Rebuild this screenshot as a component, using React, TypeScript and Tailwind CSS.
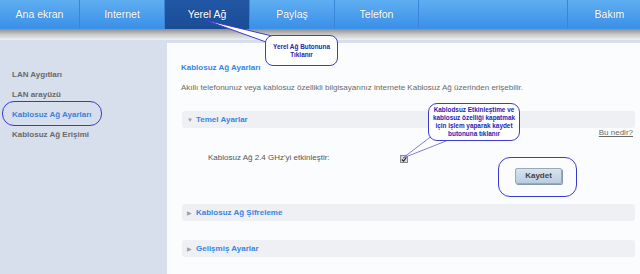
import React from "react";

const tabs: { label: string; w: string; active?: boolean }[] = [
  { label: "Ana ekran", w: "w-[80px]" },
  { label: "Internet", w: "w-[85px]" },
  { label: "Yerel Ağ", w: "w-[85px]", active: true },
  { label: "Paylaş", w: "w-[85px]" },
  { label: "Telefon", w: "w-[84px]" },
  { label: "", w: "w-[149px]" },
  { label: "Bakım", w: "w-[84px]" },
];

function SectionBar({ label, open }: { label: string; open?: boolean }) {
  return (
    <div className="h-[17px] bg-[#eff0f3] rounded-[3px] flex items-center pl-[5px]">
      <span className="text-[#9aa0a8] text-[6px] w-[8px] leading-none">{open ? "▼" : "▶"}</span>
      <span className="text-[8px] font-bold text-[#3a84e0] ml-[1px]">{label}</span>
    </div>
  );
}

export default function App() {
  return (
    <div
      className="relative w-[640px] h-[274px] overflow-hidden bg-[#d6dfeb]"
      style={{ fontFamily: '"Liberation Sans", Arial, sans-serif' }}
    >
      {/* nav */}
      <div className="flex h-[29px] bg-gradient-to-b from-[#5eaef2] to-[#3a8fe7] overflow-hidden">
        {tabs.map((t, i) => (
          <div
            key={i}
            className={`${t.w} shrink-0 h-full flex items-center justify-center text-white text-[10.5px] border-r border-[#3a86d6] ${
              t.active ? "bg-gradient-to-b from-[#2157a5] to-[#1b4c96]" : ""
            }`}
            style={{ textShadow: "0 0 1px rgba(0,0,0,0.25)" }}
          >
            {t.label}
          </div>
        ))}
      </div>
      {/* shadow band */}
      <div className="h-[11px] bg-gradient-to-b from-[#8e8e8e] via-[#c9c9c9] to-[#eef0f3]" />

      <div className="flex">
        {/* sidebar */}
        <div className="w-[167px] shrink-0 pt-[25px] pl-[12px] text-[8px] font-bold text-[#6a6a6a] leading-[20px]">
          <div>LAN Aygıtları</div>
          <div>LAN arayüzü</div>
          <div className="text-[#3b7fde]">Kablosuz Ağ Ayarları</div>
          <div>Kablosuz Ağ Erişimi</div>
        </div>

        {/* main */}
        <div className="flex-1 mt-[3px] h-[240px] bg-[#fbfcfd] pl-[15px] pr-[5px] pt-[20px]">
          <div className="text-[8px] font-bold text-[#3a84e0] leading-[10px] -ml-[1px]">
            Kablosuz Ağ Ayarları
          </div>
          <div className="text-[8px] text-[#6a6a6a] leading-[10px] mt-[10px] -ml-[1px]">
            Akıllı telefonunuz veya kablosuz özellikli bilgisayarınız internete Kablosuz Ağ üzerinden erişebilir.
          </div>
          <div className="mt-[18px]">
            <SectionBar label="Temel Ayarlar" open />
          </div>
          <div className="flex justify-end pr-[2px] mt-[0px] h-[9px] items-center">
            <span className="text-[8px] text-[#6a6a6a] underline leading-none">Bu nedir?</span>
          </div>
          <div className="flex items-center mt-[16px] pl-[26px] h-[10px]">
            <span className="w-[192px] text-[8px] text-[#555] leading-none">
              Kablosuz Ağ 2.4 GHz'yi etkinleştir:
            </span>
            <span className="w-[8px] h-[8px] border border-[#8a8a8a] bg-[#d8d8d8] flex items-center justify-center mt-[2px]">
              <svg width="7" height="7" viewBox="0 0 7 7">
                <path d="M1 3.5 L3 5.5 L6.2 1" stroke="#222" strokeWidth="1.3" fill="none" />
              </svg>
            </span>
          </div>
          <div className="flex pl-[333px] mt-[5px]">
            <div className="w-[47px] h-[16px] rounded-[2px] border border-[#9aa8b8] bg-gradient-to-b from-[#d8e4ef] to-[#b9cde0] flex items-center justify-center text-[8px] font-bold text-[#444] shadow-[1px_1px_0_#8899aa]">
              Kaydet
            </div>
          </div>
          <div className="mt-[20px]">
            <SectionBar label="Kablosuz Ağ Şifreleme" />
          </div>
          <div className="mt-[19px]">
            <SectionBar label="Gelişmiş Ayarlar" />
          </div>
        </div>
      </div>

      {/* annotation overlays */}
      <svg className="absolute left-0 top-0 pointer-events-none" width="640" height="274">
        <polygon points="205,20 272,36 266,42" fill="#ffffff" stroke="#3c3cd4" strokeWidth="1" />
        <polygon points="403,158 433,135 446,141" fill="#ffffff" stroke="#5a5ae0" strokeWidth="0.8" />
      </svg>
      <div className="absolute left-[265px] top-[35px] w-[73px] h-[31px] rounded-[8px] border border-[#3c3cd4] bg-white flex flex-col items-center justify-center text-[6.4px] font-bold text-[#1f24b0] leading-[8px] text-center">
        <div>Yerel Ağ Butonuna</div>
        <div>Tıklanır</div>
      </div>
      <div className="absolute left-[428px] top-[103px] w-[92px] h-[38px] rounded-[9px] border border-[#3c3cd4] bg-white flex flex-col items-center justify-center text-[6.4px] font-bold text-[#1f24b0] leading-[8px] text-center">
        <div>Kablodsuz Etkinleştime ve</div>
        <div>kablosuz özelliği kapatmak</div>
        <div>için işlem yaparak kaydet</div>
        <div>butonuna tıklanır</div>
      </div>
      <div className="absolute left-[2px] top-[101px] w-[100px] h-[25px] rounded-[12px] border-[1.5px] border-[#3a3ad0] pointer-events-none" />
      <div className="absolute left-[498px] top-[157px] w-[79px] h-[40px] rounded-[12px] border-[1.5px] border-[#3a3ad0] pointer-events-none" />
    </div>
  );
}
